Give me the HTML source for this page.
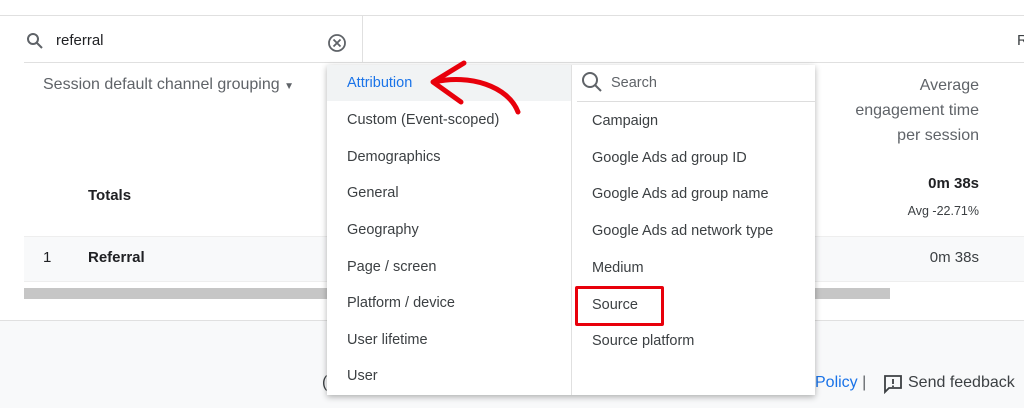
<!DOCTYPE html><html><head><style>
body{margin:0;width:1024px;height:407px;overflow:hidden;background:#fff;font-family:"Liberation Sans",Arial,sans-serif;position:relative;color:#3c4043}
.a{position:absolute;white-space:nowrap}
.mi{position:absolute;left:347px;font-size:14.5px;color:#3c4043}
.ri{position:absolute;left:592px;font-size:14.5px;color:#3c4043}
</style></head><body>
<div class="a" style="left:0;top:15px;width:1024px;height:1px;background:#e0e0e0"></div>
<div class="a" style="left:24px;top:62px;width:1000px;height:1px;background:#e0e0e0"></div>
<div class="a" style="left:362px;top:16px;width:1px;height:46px;background:#e0e0e0"></div>
<svg class="a" style="left:26px;top:32px" width="18" height="18" viewBox="0 0 18 18"><circle cx="7" cy="7" r="5" fill="none" stroke="#5f6368" stroke-width="2"/><path d="M11 11l5 5" stroke="#5f6368" stroke-width="2"/></svg>
<div class="a" style="left:56px;top:32px;font-size:15px;color:#202124">referral</div>
<svg class="a" style="left:327px;top:33px" width="20" height="20" viewBox="0 0 20 20"><circle cx="10" cy="10" r="8" fill="none" stroke="#5f6368" stroke-width="1.8"/><path d="M6.5 6.5l7 7M13.5 6.5l-7 7" stroke="#5f6368" stroke-width="1.8"/></svg>
<div class="a" style="left:1017px;top:32px;font-size:15px">R</div>
<div class="a" style="left:43px;top:76px;font-size:16px;color:#5f6368">Session default channel grouping <span style="font-size:10px">▼</span></div>
<div class="a" style="left:800px;top:73px;width:179px;text-align:right;font-size:16px;line-height:25px;color:#5f6368">Average<br>engagement time<br>per session</div>
<div class="a" style="left:88px;top:187px;font-size:15px;font-weight:bold;color:#202124">Totals</div>
<div class="a" style="left:880px;top:175px;width:99px;text-align:right;font-size:15px;font-weight:bold;color:#202124">0m 38s</div>
<div class="a" style="left:870px;top:204px;width:109px;text-align:right;font-size:12.5px">Avg -22.71%</div>
<div class="a" style="left:24px;top:236px;width:1000px;height:44px;background:#f8f9fa;border-top:1px solid #eee;border-bottom:1px solid #eee"></div>
<div class="a" style="left:43px;top:249px;font-size:15px;color:#202124">1</div>
<div class="a" style="left:88px;top:249px;font-size:15px;font-weight:bold;color:#202124">Referral</div>
<div class="a" style="left:880px;top:249px;width:99px;text-align:right;font-size:15px">0m 38s</div>
<div class="a" style="left:24px;top:288px;width:866px;height:11px;background:#c6c6c6"></div>
<div class="a" style="left:0;top:320px;width:1024px;height:87px;background:#f8f9fa;border-top:1px solid #e0e0e0"></div>
<div class="a" style="left:322px;top:374px;font-size:16px">(</div>
<div class="a" style="left:815px;top:374px;font-size:16px;color:#1a73e8">Policy <span style="color:#5f6368">|</span></div>
<svg class="a" style="left:883px;top:374px" width="20" height="20" viewBox="0 0 20 20"><path d="M2 2h16v12H6l-4 4z" fill="none" stroke="#3c4043" stroke-width="1.8"/><path d="M10 5v5M10 11.5v1.5" stroke="#3c4043" stroke-width="1.8"/></svg>
<div class="a" style="left:908px;top:374px;font-size:16px;color:#3c4043">Send feedback</div>
<div class="a" style="left:327px;top:65px;width:488px;height:330px;background:#fff;box-shadow:0 2px 6px rgba(0,0,0,.3)"></div>
<div class="a" style="left:327px;top:65px;width:244px;height:36px;background:#f1f3f4"></div>
<div class="a" style="left:571px;top:65px;width:1px;height:330px;background:#e0e0e0"></div>
<div class="mi" style="top:75px;color:#1a73e8">Attribution</div>
<div class="mi" style="top:112px">Custom (Event-scoped)</div>
<div class="mi" style="top:149px">Demographics</div>
<div class="mi" style="top:185px">General</div>
<div class="mi" style="top:222px">Geography</div>
<div class="mi" style="top:259px">Page / screen</div>
<div class="mi" style="top:295px">Platform / device</div>
<div class="mi" style="top:332px">User lifetime</div>
<div class="mi" style="top:368px">User</div>
<svg class="a" style="left:580px;top:70px" width="24" height="24" viewBox="0 0 24 24"><circle cx="10" cy="10" r="7" fill="none" stroke="#5f6368" stroke-width="2"/><path d="M15 15l6 6" stroke="#5f6368" stroke-width="2"/></svg>
<div class="a" style="left:611px;top:75px;font-size:14.5px;color:#5f6368">Search</div>
<div class="a" style="left:577px;top:101px;width:238px;height:1px;background:#ddd"></div>
<div class="ri" style="top:113px">Campaign</div>
<div class="ri" style="top:150px">Google Ads ad group ID</div>
<div class="ri" style="top:186px">Google Ads ad group name</div>
<div class="ri" style="top:223px">Google Ads ad network type</div>
<div class="ri" style="top:260px">Medium</div>
<div class="ri" style="top:297px">Source</div>
<div class="ri" style="top:333px">Source platform</div>
<div class="a" style="left:575px;top:286px;width:83px;height:34px;border:3px solid #e8000b;border-radius:2px"></div>
<svg class="a" style="left:0;top:0" width="1024" height="407"><path d="M434 82 C470 74 508 86 518 112" fill="none" stroke="#e8000b" stroke-width="5" stroke-linecap="round"/><path d="M464 63 L433 82 L461 102" fill="none" stroke="#e8000b" stroke-width="5" stroke-linecap="round" stroke-linejoin="round"/></svg>
</body></html>
